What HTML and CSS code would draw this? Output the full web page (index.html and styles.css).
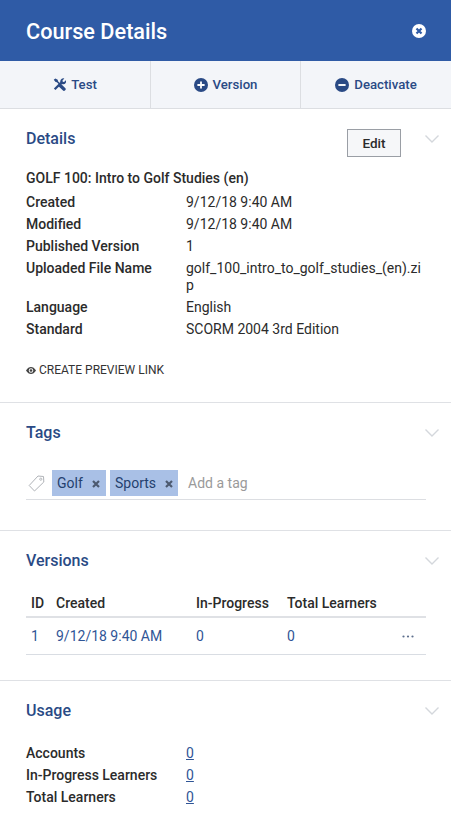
FILE: index.html
```html
<!DOCTYPE html>
<html lang="en">
<head>
<meta charset="utf-8">
<title>Course Details</title>
<link rel="stylesheet" href="styles.css">
</head>
<body>
<header class="top">
  <h1>Course Details</h1>
  <svg class="close" viewBox="0 0 14 14"><circle cx="7" cy="7" r="7" fill="#fff"/><path d="M4.500 4.500l5 5M9.500 4.500l-5 5" stroke="#2f5ba6" stroke-width="2.200"/></svg>
</header>
<nav class="actions">
  <div class="action"><svg class="ic ic-tools" viewBox="0 0 14 14"><path d="M1.800 12.200L8.500 5.500" stroke="#2a4a85" stroke-width="2.400"/><path d="M.8 1.800l1.700-1.300 2.600 1.500.3 1.400 3.500 3.500-1.200 1.200-3.500-3.500-1.400-.3z M5.900 8.900l2.600-2.600 4.600 4.400a1.800 1.800 0 0 1-2.600 2.600z" fill="#2a4a85"/><path d="M7.400 6.400L7.900 3A3 3 0 0 1 12.200.6L10.200 2.600l.3 1.400 1.400.3 1.900-2A3 3 0 0 1 11 6.700z" fill="#2a4a85"/></svg>Test</div>
  <div class="action"><svg class="ic" viewBox="0 0 14 14"><circle cx="7" cy="7" r="7" fill="#2a4a85"/><path d="M7 3.400v7.200M3.400 7h7.200" stroke="#fff" stroke-width="1.800"/></svg>Version</div>
  <div class="action"><svg class="ic" viewBox="0 0 14 14"><circle cx="7" cy="7" r="7" fill="#2a4a85"/><path d="M3.400 7h7.200" stroke="#fff" stroke-width="1.900"/></svg>Deactivate</div>
</nav>
<section class="sec details">
  <div class="sec-head">
    <h2>Details</h2>
    <button class="edit">Edit</button>
    <svg class="chev" viewBox="0 0 14 8"><path d="M.5.5L7 7 13.500.5" fill="none" stroke="#d4d7dc" stroke-width="1.400"/></svg>
  </div>
  <p class="course">GOLF 100: Intro to Golf Studies (en)</p>
  <dl class="info">
    <dt>Created</dt><dd>9/12/18 9:40 AM</dd>
    <dt>Modified</dt><dd>9/12/18 9:40 AM</dd>
    <dt>Published Version</dt><dd>1</dd>
    <dt>Uploaded File Name</dt><dd>golf_100_intro_to_golf_studies_(en).zip</dd>
    <dt>Language</dt><dd>English</dd>
    <dt>Standard</dt><dd>SCORM 2004 3rd Edition</dd>
  </dl>
  <div class="preview"><svg class="eye" viewBox="0 0 10 7"><path d="M0 3.500C1.500 1 3.200 0 5 0s3.500 1 5 3.500C8.500 6 6.800 7 5 7S1.500 6 0 3.500z" fill="#444"/><circle cx="5" cy="3.500" r="2.200" fill="#fff"/><circle cx="5" cy="3.500" r="1.300" fill="#444"/></svg>CREATE PREVIEW LINK</div>
</section>
<section class="sec tags">
  <div class="sec-head">
    <h2>Tags</h2>
    <svg class="chev" viewBox="0 0 14 8"><path d="M.5.5L7 7 13.500.5" fill="none" stroke="#d4d7dc" stroke-width="1.400"/></svg>
  </div>
  <div class="tag-input">
    <svg class="tag-ic" viewBox="0 0 17 17"><path d="M10 1L15.500 1.500 15.800 7 6.500 16 1.200 10.500z" fill="none" stroke="#b0b3b8" stroke-width="1"/><circle cx="12.800" cy="4.200" r="1.100" fill="none" stroke="#b0b3b8" stroke-width=".9"/></svg>
    <span class="chip chip-golf">Golf<svg class="x" viewBox="0 0 8 8"><path d="M1 1l6 6M7 1L1 7" stroke="#4d5a70" stroke-width="2.200"/></svg></span>
    <span class="chip">Sports<svg class="x" viewBox="0 0 8 8"><path d="M1 1l6 6M7 1L1 7" stroke="#4d5a70" stroke-width="2.200"/></svg></span>
    <span class="ph">Add a tag</span>
  </div>
</section>
<section class="sec versions">
  <div class="sec-head">
    <h2>Versions</h2>
    <svg class="chev" viewBox="0 0 14 8"><path d="M.5.5L7 7 13.500.5" fill="none" stroke="#d4d7dc" stroke-width="1.400"/></svg>
  </div>
  <div class="vt vt-head">
    <span>ID</span><span>Created</span><span>In-Progress</span><span>Total Learners</span><span></span>
  </div>
  <div class="vt vt-row">
    <span>1</span><span>9/12/18 9:40 AM</span><span>0</span><span>0</span>
    <svg class="dots" viewBox="0 0 12 3"><circle cx="1.500" cy="1.500" r="1.100"/><circle cx="6" cy="1.500" r="1.100"/><circle cx="10.500" cy="1.500" r="1.100"/></svg>
  </div>
</section>
<section class="sec usage">
  <div class="sec-head">
    <h2>Usage</h2>
    <svg class="chev" viewBox="0 0 14 8"><path d="M.5.5L7 7 13.500.5" fill="none" stroke="#d4d7dc" stroke-width="1.400"/></svg>
  </div>
  <dl class="info use">
    <dt>Accounts</dt><dd><a href="#">0</a></dd>
    <dt>In-Progress Learners</dt><dd><a href="#">0</a></dd>
    <dt>Total Learners</dt><dd><a href="#">0</a></dd>
  </dl>
</section>
</body>
</html>
```
FILE: styles.css
```css
* { box-sizing: border-box; }
html, body { margin: 0; padding: 0; }
body { width: 451px; height: 837px; overflow: hidden; background: #fff; font-family: Roboto, "Liberation Sans", sans-serif; font-size: 14px; color: #2b2b2b; }
.top { height: 61px; background: #2f5ba6; display: flex; align-items: center; justify-content: space-between; padding: 1px 25px 0 26px; }
.top h1 { margin: 0; font-size: 21.7px; font-weight: 500; color: #fff; }
.close { width: 14px; height: 14px; display: block; }
.actions { height: 48px; display: grid; grid-template-columns: 151px 150px 150px; background: #f3f5f9; border-bottom: 1px solid #dcdee2; }
.action { display: flex; align-items: center; justify-content: center; gap: 5px; font-size: 13.2px; font-weight: 500; color: #2a4a85; border-right: 1px solid #dcdee2; }
.action:last-child { border-right: 0; }
.ic { width: 14px; height: 14px; display: block; }
.ic-tools { width: 13px; height: 13px; }
.sec { padding: 20px 12px 0 26px; border-bottom: 1px solid #dfe1e5; }
.sec-head { display: flex; align-items: flex-start; height: 20px; }
.sec-head h2 { margin: 0; font-size: 16px; line-height: 20px; font-weight: 500; color: #2a4a85; margin-right: auto; }
.chev { width: 14px; height: 8px; display: block; margin-top: 6px; }
.details { height: 294px; }
.details .sec-head { height: 28px; }
.details .sec-head .edit { margin-right: 24px; }
.edit { width: 54px; height: 28px; padding: 0; background: #f6f7f9; border: 1px solid #9a9ea5; font: 500 13.5px Roboto, sans-serif; color: #2b2b2b; }
.course { margin: 10px 0 0; font-weight: 500; font-size: 14px; line-height: 22px; }
.info { margin: 3px 0 0; display: grid; grid-template-columns: 160px 240px; font-size: 14px; }
.info dt { line-height: 21px; padding-bottom: 1px; font-weight: 500; }
.info dd { margin: 0; line-height: 17px; padding: 2px 0 3px; overflow-wrap: anywhere; }
.preview { margin-top: 21px; display: flex; align-items: center; gap: 3px; font-size: 12px; line-height: 16px; color: #333; }
.eye { width: 10px; height: 7px; display: block; }
.tags { height: 128px; }
.tag-input { width: 400px; margin-top: 27px; height: 30px; display: flex; align-items: flex-start; gap: 4px; border-bottom: 1px solid #dcdee2; padding-left: 2px; }
.tag-ic { width: 17px; height: 17px; margin: 5px 3px 0 0; display: block; }
.chip { height: 26px; background: #a9c0e6; display: flex; align-items: center; gap: 9px; padding: 0 5px 1px; color: #24406f; font-size: 14px; }
.chip-golf { width: 54px; }
.x { width: 8px; height: 8px; display: block; margin-top: 2px; }
.ph { margin: 5px 0 0 6px; line-height: 17px; color: #9a9a9a; }
.versions { height: 150px; }
.vt { width: 400px; display: grid; grid-template-columns: 30px 140px 91px 111px 28px; align-items: center; }
.vt span:first-child { padding-left: 5px; }
.vt-head { margin-top: 23px; height: 24px; border-bottom: 2px solid #dfe1e5; font-weight: 500; padding-bottom: 5px; }
.vt-row { height: 37px; border-bottom: 1px solid #d9dde3; color: #2f5596; }
.dots { width: 12px; height: 3px; display: block; fill: #5d6f8d; margin-left: 4px; margin-top: 1px; }
.usage { border-bottom: 0; }
.use { margin-top: 22px; }
.use dd { line-height: 21px; padding: 0 0 1px; }
.use a { color: #2f5596; }
```
